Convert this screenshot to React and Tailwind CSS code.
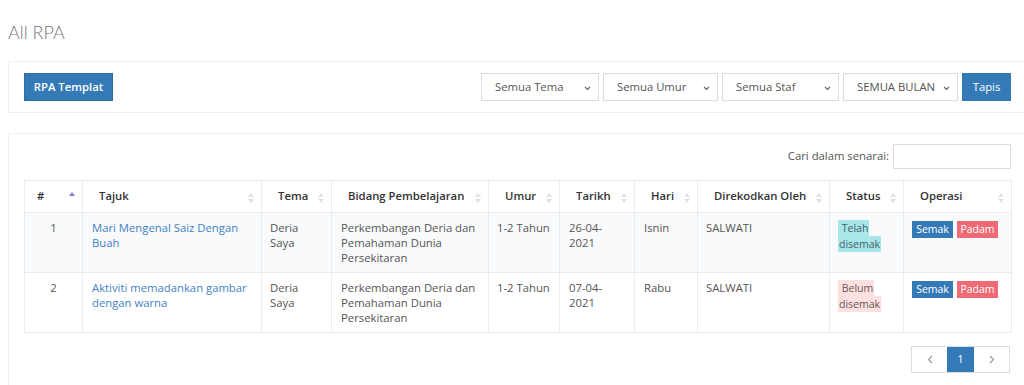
import React from "react";

const rows = [
  {
    no: 1,
    tajuk: "Mari Mengenal Saiz Dengan Buah",
    tema: "Deria Saya",
    bidang: "Perkembangan Deria dan Pemahaman Dunia Persekitaran",
    umur: "1-2 Tahun",
    tarikh: "26-04-2021",
    hari: "Isnin",
    oleh: "SALWATI",
    done: true,
  },
  {
    no: 2,
    tajuk: "Aktiviti memadankan gambar dengan warna",
    tema: "Deria Saya",
    bidang: "Perkembangan Deria dan Pemahaman Dunia Persekitaran",
    umur: "1-2 Tahun",
    tarikh: "07-04-2021",
    hari: "Rabu",
    oleh: "SALWATI",
    done: false,
  },
];

const headers = [
  { label: "#", w: "w-[58px]", pad: "pl-3" },
  { label: "Tajuk", w: "w-[179px]", pad: "pl-4" },
  { label: "Tema", w: "w-[70px]", pad: "pl-4" },
  { label: "Bidang Pembelajaran", w: "w-[157px]", pad: "pl-4" },
  { label: "Umur", w: "w-[71px]", pad: "pl-4" },
  { label: "Tarikh", w: "w-[75px]", pad: "pl-4" },
  { label: "Hari", w: "w-[63px]", pad: "pl-4" },
  { label: "Direkodkan Oleh", w: "w-[132px]", pad: "pl-4" },
  { label: "Status", w: "w-[74px]", pad: "pl-4" },
  { label: "Operasi", w: "w-[108px]", pad: "pl-4" },
];

function SortIcon({ active }) {
  if (active) {
    return (
      <svg width="8" height="12" viewBox="0 0 8 12" className="absolute right-[6px] top-[10px]">
        <path d="M1 5 L4 1 L7 5 Z" fill="#7d7de0" />
      </svg>
    );
  }
  return (
    <svg width="8" height="12" viewBox="0 0 8 12" className="absolute right-[6px] top-[11px]">
      <path d="M1 5 L4 1 L7 5 Z" fill="#e0e0e0" />
      <path d="M1 7 L4 11 L7 7 Z" fill="#e0e0e0" />
    </svg>
  );
}

function Chevron() {
  return (
    <svg width="7" height="5" viewBox="0 0 7 5" className="absolute right-[7px] top-[12px]">
      <path d="M1 1 L3.5 3.5 L6 1" fill="none" stroke="#666" strokeWidth="1.2" />
    </svg>
  );
}

function FakeSelect({ label, w }) {
  return (
    <div className={`relative h-[28px] ${w} border border-[#dcdcdc] bg-white text-[11.3px] text-[#555] pl-[13px] leading-[26px]`}>
      {label}
      <Chevron />
    </div>
  );
}

const td = "border border-[#e8ecef] align-top pt-[7px] pb-[7px] leading-[15px]";

export default function App() {
  return (
    <div className="min-h-[385px] bg-white font-['Open_Sans',sans-serif] text-[11.3px] text-[#555] pl-2 pt-[20px] overflow-hidden">
      <h1 className="text-[18px] font-light text-[#777] leading-[24px] font-['Lato','Open_Sans',sans-serif]">
        All RPA
      </h1>

      {/* toolbar */}
      <div className="mt-[17px] h-[52px] border-t border-b border-l border-[#eeeeee] flex items-center justify-between pl-[15px] pr-[13px]">
        <button className="h-[28px] w-[89px] bg-[#337ab7] border border-[#2e6da4] text-white text-[11.3px] font-semibold">
          RPA Templat
        </button>
        <div className="flex items-center gap-[4px]">
          <FakeSelect label="Semua Tema" w="w-[118px]" />
          <FakeSelect label="Semua Umur" w="w-[115px]" />
          <FakeSelect label="Semua Staf" w="w-[117px]" />
          <FakeSelect label="SEMUA BULAN" w="w-[115px]" />
          <button className="h-[28px] w-[49px] bg-[#337ab7] text-white text-[11.3px]">Tapis</button>
        </div>
      </div>

      {/* list panel */}
      <div className="mt-[20px] border-t border-l border-[#eeeeee] pl-[15px] pr-[13px] pt-[10px] pb-4">
        <div className="flex justify-end items-center gap-[4px]">
          <span>Cari dalam senarai:</span>
          <div className="h-[25px] w-[118px] border border-[#dcdcdc] bg-white" />
        </div>

        <table className="mt-[11px] table-fixed border-collapse w-[987px] border border-[#e8ecef]">
          <colgroup>
            {headers.map((h) => (
              <col key={h.label} className={h.w} />
            ))}
          </colgroup>
          <thead>
            <tr className="h-[32px]">
              {headers.map((h, i) => (
                <th
                  key={h.label}
                  className={`relative border border-[#e8ecef] ${h.pad} pr-4 text-left font-semibold text-[11.3px] text-[#333]`}
                >
                  {h.label}
                  <SortIcon active={i === 0} />
                </th>
              ))}
            </tr>
          </thead>
          <tbody>
            {rows.map((r, idx) => (
              <tr key={r.no} className={idx % 2 === 0 ? "bg-[#f9fafc]" : "bg-white"}>
                <td className={`${td} text-center`}>{r.no}</td>
                <td className={`${td} pl-[9px] pr-1 text-[#3f82c4]`}>{r.tajuk}</td>
                <td className={`${td} pl-[8px] pr-[12px]`}>{r.tema}</td>
                <td className={`${td} pl-[9px] pr-1`}>{r.bidang}</td>
                <td className={`${td} pl-[8px] pr-1`}>{r.umur}</td>
                <td className={`${td} pl-[9px] pr-2`}>{r.tarikh}</td>
                <td className={`${td} pl-[9px] pr-2`}>{r.hari}</td>
                <td className={`${td} pl-[8px] pr-2`}>{r.oleh}</td>
                <td className={`${td} pl-[8px] pr-2`}>
                  <span
                    className={`text-[10.5px] leading-[15px] px-[1px] py-[1px] [box-decoration-break:clone] ${
                      r.done ? "bg-[#a9e6ea] text-[#3d6266]" : "bg-[#fde1e1] text-[#6a5656]"
                    }`}
                  >
                    {"\u00a0"}
                    {r.done ? "Telah" : "Belum"}
                    <br />
                    disemak
                  </span>
                </td>
                <td className={`${td} pl-[8px] pr-2`}>
                  <div className="flex gap-[4px] pt-[1px]">
                    <span className="h-[17px] w-[41px] bg-[#337ab7] text-white text-[10.5px] leading-[17px] text-center">Semak</span>
                    <span className="h-[17px] w-[41px] bg-[#ef6a74] text-white text-[10.5px] leading-[17px] text-center">Padam</span>
                  </div>
                </td>
              </tr>
            ))}
          </tbody>
        </table>

        <div className="mt-[13px] flex justify-end">
          <div className="flex h-[27px] border border-[#dddddd] mr-[1px]">
            <div className="w-[35px] flex items-center justify-center">
              <svg width="6" height="9" viewBox="0 0 6 9">
                <path d="M5 1 L1.5 4.5 L5 8" fill="none" stroke="#999" strokeWidth="1.2" />
              </svg>
            </div>
            <div className="w-[27px] flex items-center justify-center bg-[#337ab7] text-white">1</div>
            <div className="w-[35px] flex items-center justify-center">
              <svg width="6" height="9" viewBox="0 0 6 9">
                <path d="M1 1 L4.5 4.5 L1 8" fill="none" stroke="#999" strokeWidth="1.2" />
              </svg>
            </div>
          </div>
        </div>
      </div>
    </div>
  );
}
